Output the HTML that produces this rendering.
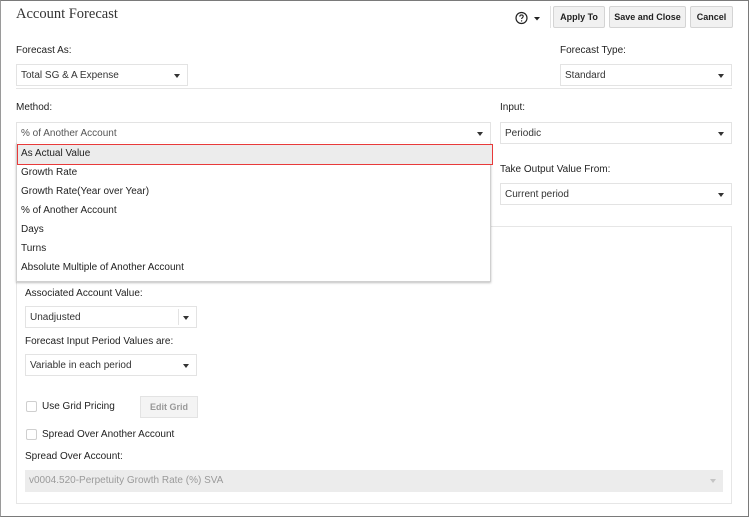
<!DOCTYPE html>
<html><head><meta charset="utf-8"><style>
*{box-sizing:border-box;margin:0;padding:0}
body{width:750px;height:518px;background:#fff;font-family:"Liberation Sans",sans-serif;font-size:10px;color:#222;position:relative;overflow:hidden}
.a{position:absolute}
.frame{left:0;top:0;width:749px;height:517px;border:1px solid #7a7a7a;border-left-color:#9a9a9a}
.title{left:16px;top:6px;font-family:"Liberation Serif",serif;font-size:14.5px;color:#333}
.btn{top:6px;height:22px;background:#f1f1f1;border:1px solid #d4d4d4;border-radius:2px;font-weight:bold;font-size:9px;line-height:20px;text-align:center;color:#222}
.lbl{font-size:10px;color:#222}
.sel{height:22px;border:1px solid #e3e3e3;background:#fff;line-height:21px;padding-left:4px;font-size:10px;color:#333}
.sel .ar{position:absolute;right:7px;top:9px;width:0;height:0;border-left:3.5px solid transparent;border-right:3.5px solid transparent;border-top:4px solid #333}
.item{left:21px;font-size:10px;color:#222}
.cb{width:11px;height:11px;border:1px solid #cfcfcf;border-radius:2px;background:#fff}
</style></head><body>
<div class="a frame"></div>
<div class="a title">Account Forecast</div>
<svg class="a" style="left:514px;top:10px" width="30" height="16" viewBox="0 0 30 16">
<circle cx="7.5" cy="8" r="5.5" fill="none" stroke="#222" stroke-width="1.2"/>
<path d="M5.8 6.6c0-1.1.8-1.7 1.7-1.7s1.7.6 1.7 1.5c0 1.2-1.6 1.3-1.6 2.6" fill="none" stroke="#222" stroke-width="1.1"/>
<circle cx="7.6" cy="10.9" r=".7" fill="#222"/>
<path d="M20 7h6l-3 3.5z" fill="#222"/></svg>
<div class="a" style="left:550px;top:6px;width:1px;height:22px;background:#e2e2e2"></div>
<div class="a btn" style="left:553px;width:52px">Apply To</div>
<div class="a btn" style="left:609px;width:77px">Save and Close</div>
<div class="a btn" style="left:690px;width:43px">Cancel</div>

<div class="a lbl" style="left:16px;top:45px">Forecast As:</div>
<div class="a sel" style="left:16px;top:64px;width:172px">Total SG &amp; A Expense<span class="ar"></span></div>
<div class="a lbl" style="left:560px;top:45px">Forecast Type:</div>
<div class="a sel" style="left:560px;top:64px;width:172px">Standard<span class="ar"></span></div>
<div class="a" style="left:16px;top:88px;width:716px;height:1px;background:#e5e5e5"></div>

<div class="a lbl" style="left:16px;top:102px">Method:</div>
<div class="a sel" style="left:16px;top:122px;width:475px;color:#555">% of Another Account<span class="ar"></span></div>
<div class="a lbl" style="left:500px;top:102px">Input:</div>
<div class="a sel" style="left:500px;top:122px;width:232px">Periodic<span class="ar"></span></div>
<div class="a lbl" style="left:500px;top:164px">Take Output Value From:</div>
<div class="a sel" style="left:500px;top:183px;width:232px">Current period<span class="ar"></span></div>

<div class="a" style="left:16px;top:226px;width:716px;height:278px;border:1px solid #e6e6e6"></div>

<div class="a" style="left:16px;top:143px;width:475px;height:139px;background:#fff;border:1px solid #d0d0d0;border-top:none;box-shadow:0 1px 2px rgba(0,0,0,.25)"></div>
<div class="a" style="left:17px;top:144px;width:476px;height:21px;background:#ececec;border:1.5px solid #e83a3a"></div>
<div class="a item" style="top:148px">As Actual Value</div>
<div class="a item" style="top:167px">Growth Rate</div>
<div class="a item" style="top:186px">Growth Rate(Year over Year)</div>
<div class="a item" style="top:205px">% of Another Account</div>
<div class="a item" style="top:224px">Days</div>
<div class="a item" style="top:243px">Turns</div>
<div class="a item" style="top:262px">Absolute Multiple of Another Account</div>

<div class="a lbl" style="left:25px;top:288px">Associated Account Value:</div>
<div class="a sel" style="left:25px;top:306px;width:172px">Unadjusted<span class="ar"></span><span style="position:absolute;left:152px;top:2px;width:1px;height:16px;background:#e3e3e3"></span></div>
<div class="a lbl" style="left:25px;top:336px">Forecast Input Period Values are:</div>
<div class="a sel" style="left:25px;top:354px;width:172px">Variable in each period<span class="ar"></span></div>

<div class="a cb" style="left:26px;top:401px"></div>
<div class="a lbl" style="left:42px;top:401px">Use Grid Pricing</div>
<div class="a" style="left:140px;top:396px;width:58px;height:22px;background:#f4f4f4;border:1px solid #e3e3e3;font-weight:bold;font-size:9px;color:#999;text-align:center;line-height:20px">Edit Grid</div>
<div class="a cb" style="left:26px;top:429px"></div>
<div class="a lbl" style="left:42px;top:429px">Spread Over Another Account</div>
<div class="a lbl" style="left:25px;top:451px">Spread Over Account:</div>
<div class="a" style="left:25px;top:470px;width:698px;height:22px;background:#ececec;color:#9a9a9a;font-size:10px;line-height:22px;padding-left:4px">v0004.520-Perpetuity Growth Rate (%) SVA<span style="position:absolute;right:7px;top:9px;border-left:3.5px solid transparent;border-right:3.5px solid transparent;border-top:4px solid #c4c4c4"></span></div>
</body></html>
